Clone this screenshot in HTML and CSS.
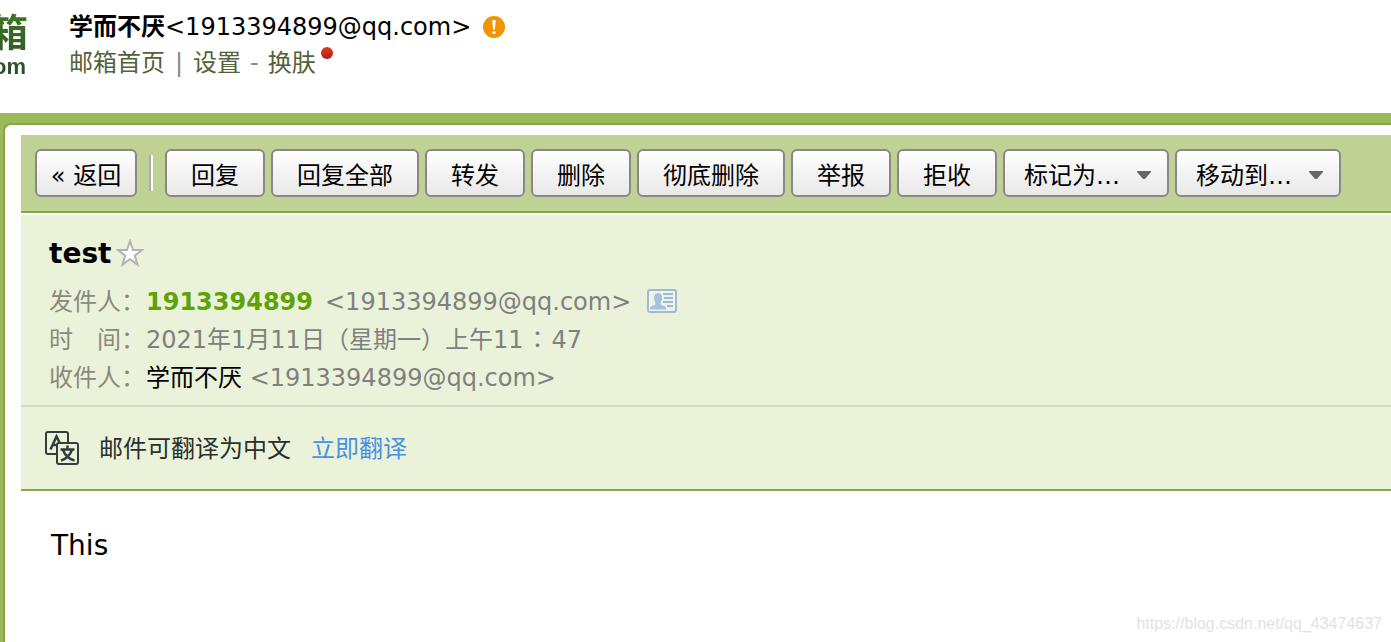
FILE: index.html
```html
<!DOCTYPE html>
<html lang="zh-CN">
<head>
<meta charset="utf-8">
<title>test</title>
<link rel="stylesheet" href="styles.css">
</head>
<body>
<header class="header">
  <div class="logo"><span class="logo-name">箱</span><span class="logo-domain">om</span></div>
  <div class="account">
    <div class="account-row">
      <span><b>学而不厌</b>&lt;1913394899@qq.com&gt;</span>
      <svg class="alert" viewBox="0 0 22 22" aria-hidden="true"><circle cx="11" cy="11" r="11" fill="#f29400"/><path d="M9.300 4h3.400l-.7 9.500h-2z" fill="#fff"/><circle cx="11" cy="16.500" r="1.600" fill="#fff"/></svg>
    </div>
    <nav class="account-row links">
      <a href="#">邮箱首页</a><span class="bar">|</span><a href="#">设置</a><span class="dash">-</span><a href="#" class="skin">换肤<i class="dot"></i></a>
    </nav>
  </div>
</header>
<main class="frame">
  <div class="panel">
    <div class="toolbar">
      <button class="btn back" type="button">« 返回</button>
      <span class="separator"></span>
      <button class="btn" type="button">回复</button>
      <button class="btn" type="button">回复全部</button>
      <button class="btn" type="button">转发</button>
      <button class="btn" type="button">删除</button>
      <button class="btn" type="button">彻底删除</button>
      <button class="btn" type="button">举报</button>
      <button class="btn" type="button">拒收</button>
      <div class="dropdown"><select class="btn" aria-label="标记为"><option>标记为…</option></select><svg class="arrow" viewBox="0 0 14 8" aria-hidden="true"><path d="M0 0h14v1L8 8H6L0 1z" fill="#666"/></svg></div>
      <div class="dropdown"><select class="btn" aria-label="移动到"><option>移动到…</option></select><svg class="arrow" viewBox="0 0 14 8" aria-hidden="true"><path d="M0 0h14v1L8 8H6L0 1z" fill="#666"/></svg></div>
    </div>
    <section class="info">
      <h1 class="subject">test
        <svg class="star" viewBox="0 0 28 28" aria-hidden="true"><path d="M14 2l3 9h9l-7.200 5.600 2.700 9L14 20.200l-7.500 5.400 2.700-9L2 11h9z" fill="#fff" stroke="#b1b3b6" stroke-width="2"/></svg>
      </h1>
      <dl class="meta">
        <div class="meta-row"><dt>发件人：</dt><dd class="from"><b class="sender">1913394899</b><span>&lt;1913394899@qq.com&gt;</span></dd>
          <svg class="card" viewBox="0 0 30 24" aria-hidden="true"><rect x="1" y="1" width="28" height="22" rx="2" fill="#eef5e7" stroke="#9dbad6" stroke-width="2"/><path d="M3 20.500v-2c1-1.500 4-2 5.500-3v-1.500C7 12 7 10 7.200 7.500 7.500 5 9 4 11 4s3.700 1 4 3.500c.1 2.500 0 4.500-1.500 6.500v1.500c1.500 1 4.500 1.500 5.500 3v2z" fill="#a5c1df"/><path d="M16 5h10M17 9h9M16 13h10M20 17h6" stroke="#9dbad6" stroke-width="2"/></svg>
        </div>
        <div class="meta-row"><dt>时　间：</dt><dd>2021年1月11日（星期一）上午11<span class="colon" lang="zh-TW">：</span>47</dd></div>
        <div class="meta-row"><dt>收件人：</dt><dd><span class="recipient">学而不厌</span> &lt;1913394899@qq.com&gt;</dd></div>
      </dl>
    </section>
    <section class="translate">
      <svg class="translate-icon" viewBox="0 0 34 34" fill="none" stroke="#343c3c" stroke-width="2" aria-hidden="true"><path d="M11 23H3a2 2 0 0 1-2-2V3a2 2 0 0 1 2-2h18a2 2 0 0 1 2 2v8"/><path d="M5.500 18.500L11.500 5.500l3 6M8 14h4" stroke-width="2.500"/><rect x="12" y="12" width="21" height="21" rx="2"/><path d="M22.500 14.500v3.500M15.500 18.500h14M18 19c2 5 6 9 11.500 10.500M27 19c-2 5-6 9-11 10.500" stroke-width="2.500"/></svg>
      <span>邮件可翻译为中文</span>
      <a href="#">立即翻译</a>
    </section>
    <article class="content">This</article>
  </div>
</main>
<footer class="watermark">https://blog.csdn.net/qq_43474637</footer>
</body>
</html>
```
FILE: styles.css
```css
* { box-sizing: border-box; }
body {
  margin: 0;
  min-height: 100vh;
  display: flex;
  flex-direction: column;
  background: #fff;
  color: #000;
  font: 24px/36px "DejaVu Sans", "Noto Sans CJK SC", sans-serif;
  overflow-x: hidden;
}
a { text-decoration: none; }
.header { display: flex; gap: 41px; padding: 9px 0 32px; }
.logo {
  width: 28px;
  display: flex;
  flex-direction: column;
  align-items: flex-end;
  overflow: hidden;
  font-weight: bold;
  color: transparent;
  background: linear-gradient(#3f7a22, #2d472d);
  background-clip: text;
  -webkit-background-clip: text;
}
.logo-name { font-size: 38px; line-height: 48px; }
.logo-domain { font: bold 22px/20px "Liberation Sans", sans-serif; padding-right: 2px; }
.account-row { display: flex; align-items: center; white-space: nowrap; }
.alert { width: 22px; height: 22px; margin-left: 12px; }
.links a { color: #52613a; }
.bar { margin: 0 10px; color: #888; }
.dash { margin: 0 9px; color: #888; }
.skin { position: relative; }
.dot {
  position: absolute;
  left: 100%;
  top: 2px;
  margin-left: 5px;
  width: 12px;
  height: 12px;
  border-radius: 50%;
  background: linear-gradient(#e04010, #b01828);
}
.frame {
  flex: 1;
  display: flex;
  padding: 10px 0 0 3px;
  background: #9cbb58;
}
.panel {
  flex: 1;
  min-width: 0;
  padding: 10px 0 0 16px;
  background: #fff;
  border: solid #87a54a;
  border-width: 2px 0 0 2px;
  border-top-left-radius: 8px;
}
.toolbar {
  display: flex;
  align-items: center;
  gap: 6px;
  padding: 14px;
  background: #bfd293;
  border-bottom: 2px solid #87a54a;
}
.btn {
  flex: none;
  height: 48px;
  padding: 5px 24px 0;
  border: 2px solid #888;
  border-radius: 6px;
  background: linear-gradient(#fff, #e8e8e8);
  color: #000;
  font: inherit;
  white-space: nowrap;
}
.back { width: 102px; padding: 5px 0 0; }
.separator {
  width: 4px;
  height: 36px;
  margin: 0 6px;
  border-left: 2px solid #aaa;
  background: #fff;
}
.dropdown { position: relative; flex: none; }
.dropdown .btn { display: block; width: 166px; padding: 5px 19px 0; appearance: none; }
.arrow { position: absolute; right: 18px; top: 22px; width: 14px; height: 8px; pointer-events: none; }
.info {
  margin-top: 2px;
  padding: 19px 28px 8px;
  background: #eaf3d9;
  border-bottom: 2px solid #d3dcc3;
}
.subject {
  display: flex;
  align-items: center;
  gap: 5px;
  margin: 0 0 9px;
  font-size: 28px;
  line-height: 40px;
}
.star { width: 28px; height: 28px; margin-bottom: 3px; }
.meta { margin: 0; color: #808080; }
.meta-row { display: flex; align-items: center; line-height: 38px; white-space: nowrap; }
dt { width: 97px; color: #8c8880; }
dd { margin: 0; }
.from { display: flex; gap: 12px; }
.colon { font-family: "Noto Sans CJK TC", sans-serif; line-height: 24px; margin: 0 2px; }
.sender { color: #5fa207; }
.recipient { color: #000; }
.card { width: 30px; height: 24px; margin: 0 0 2px 16px; }
.translate {
  display: flex;
  align-items: center;
  gap: 20px;
  padding: 24px;
  background: #eaf3d9;
  border-bottom: 2px solid #87a54a;
  color: #2b2f2f;
  line-height: 36px;
}
.translate > * { margin-bottom: -2px; }
.translate .translate-icon { width: 34px; height: 34px; margin: 0; }
.translate a { color: #4a90e2; }
.content { padding: 37px 30px; font-size: 28px; }
.watermark {
  position: absolute;
  right: 9px;
  bottom: 6px;
  font: 16px/24px "Liberation Sans", sans-serif;
  color: #e2e2e2;
}
```
